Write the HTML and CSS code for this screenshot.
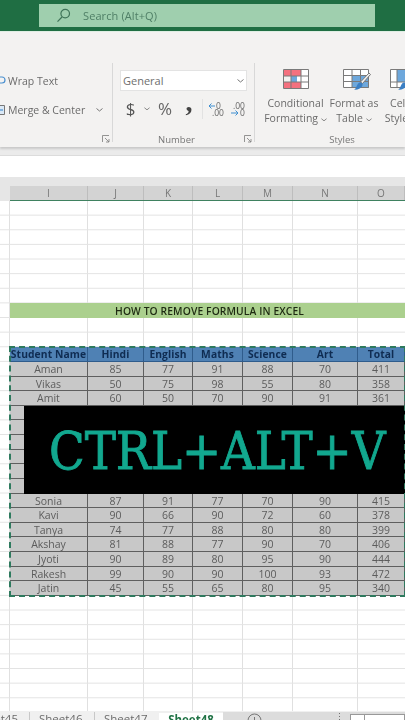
FILE: index.html
```html
<!DOCTYPE html>
<html lang="en">
<head>
<meta charset="utf-8">
<title>How to remove formula in Excel</title>
<link rel="stylesheet" href="styles.css">
</head>
<body>
<div class="app">
  <header class="titlebar">
    <div class="search">
      <svg class="search-icon" width="15" height="15" viewBox="0 0 15 15"><circle cx="9.2" cy="5.6" r="4.3"/><path d="M6 9 1.5 13.6"/></svg>
      <span>Search (Alt+Q)</span>
    </div>
  </header>

  <section class="ribbon">
    <div class="group group-align">
      <div class="align-row"><svg width="6" height="14" viewBox="0 0 6 14"><path class="ic-blue" d="M-3 3h5a2.5 2.5 0 0 1 0 6h-3"/></svg><span>Wrap Text</span></div>
      <div class="align-row"><svg width="6" height="14" viewBox="0 0 6 14"><path class="ic-box" d="M-3 2.5h7.5v9H-3z"/><path class="ic-blue" d="M-2 7h5"/></svg><span>Merge &amp; Center</span><svg class="chev chev-merge" width="7" height="4" viewBox="0 0 7 4"><path d="M.5.5 3.500 3 6.500.5"/></svg></div>
      <svg class="launcher" width="8" height="8" viewBox="0 0 8 8"><path d="M.5 7V.5H7M3 3l4 4M4 7h3V4"/></svg>
    </div>

    <div class="group group-number">
      <div class="select"><span>General</span><svg class="chev" width="7" height="4" viewBox="0 0 7 4"><path d="M.5.5 3.500 3 6.500.5"/></svg></div>
      <div class="num-tools">
        <span class="dollar">$</span>
        <svg class="chev chev-dollar" width="6" height="4" viewBox="0 0 7 4"><path d="M.5.5 3.500 3 6.500.5"/></svg>
        <span class="percent">%</span>
        <span class="comma">,</span>
        <i class="tool-sep"></i>
        <svg class="dec" width="16" height="17" viewBox="0 0 16 17"><text x="8" y="7.500">0</text><text x="4" y="15">.00</text><path class="ic-arrow" d="M7 5H1M3.500 2.500 1 5l2.500 2.500"/></svg>
        <svg class="dec dec-b" width="16" height="17" viewBox="0 0 16 17"><text x="3" y="7.500">.00</text><text x="10" y="15">0</text><path class="ic-arrow" d="M1 12h7M5.500 9.500 8 12l-2.500 2.500"/></svg>
      </div>
      <div class="group-label label-number">Number</div>
      <svg class="launcher" width="8" height="8" viewBox="0 0 8 8"><path d="M.5 7V.5H7M3 3l4 4M4 7h3V4"/></svg>
    </div>

    <div class="group group-styles">
      <div class="style-tools">
        <div class="style-btn btn-cf">
          <svg width="26" height="20" viewBox="0 0 26 20"><path fill="#f4717f" d="M1 1h17v6H1zM1 13h17v6H1z"/><path fill="#6ea8dc" d="M8 7h6v6H8z"/><path fill="#fff" d="M14 7h11v6H14zM18 1h7v6h-7zM18 13h7v6h-7z"/><path class="ic-grid" d="M.5.5h25v19H.5zM.5 7h25M.5 13h25M8 .5v19M18 .5v19"/></svg>
          <span>Conditional</span>
          <span>Formatting <svg class="chev" width="6" height="4" viewBox="0 0 7 4"><path d="M.5.5 3.500 3 6.500.5"/></svg></span>
        </div>
        <div class="style-btn btn-table">
          <svg width="28" height="22" viewBox="0 0 28 22"><path fill="#fff" d="M.5.500h25v18H.5z"/><path fill="#6ea8dc" d="M9 7h17v12H9z"/><path class="ic-grid" d="M.5.5h25v18H.5zM.5 6.500h25M.5 12.500h25M9 .5v18M17.500.5v18"/><path fill="#f3f2f1" stroke="#777" d="m26 4 1.500 1.500-8 9-2-1.500z"/><path fill="#3b7fc4" d="M17 13.500c2 0 3.500 1.500 2 4-1.500 2.500-5 3.500-8 3 2-1 2-2 3-4 .7-1.500 1.500-3 3-3z"/></svg>
          <span>Format as</span>
          <span>Table <svg class="chev" width="6" height="4" viewBox="0 0 7 4"><path d="M.5.5 3.500 3 6.500.5"/></svg></span>
        </div>
        <div class="style-btn btn-cell">
          <svg width="28" height="22" viewBox="0 0 28 22"><path fill="#fff" d="M.5.500h25v18H.5z"/><path fill="#6ea8dc" d="M7 1h19v12H7z"/><path class="ic-grid" d="M.5.5h25v18H.5zM.5 13h25M7 .5v18"/><path fill="#3b7fc4" d="M14 13.500c2 0 3.500 1.500 2 4-1.500 2.500-5 3.500-8 3 2-1 2-2 3-4 .7-1.500 1.500-3 3-3z"/></svg>
          <span>Cell</span>
          <span>Styles</span>
        </div>
      </div>
      <div class="group-label label-styles">Styles</div>
    </div>
  </section>

  <div class="band band-a"></div>
  <div class="formula"></div>
  <div class="band band-b"></div>

  <div class="colhead">
    <span class="corner"></span>
    <span>I</span><span>J</span><span>K</span><span>L</span><span>M</span><span>N</span><span>O</span>
  </div>

  <main class="sheet">
    <h1 class="sheet-title">HOW TO REMOVE FORMULA IN EXCEL</h1>
    <div class="table">
      <div class="row head"><span>Student Name</span><span>Hindi</span><span>English</span><span>Maths</span><span>Science</span><span>Art</span><span>Total</span></div>
      <div class="row"><span>Aman</span><span>85</span><span>77</span><span>91</span><span>88</span><span>70</span><span>411</span></div>
      <div class="row"><span>Vikas</span><span>50</span><span>75</span><span>98</span><span>55</span><span>80</span><span>358</span></div>
      <div class="row"><span>Amit</span><span>60</span><span>50</span><span>70</span><span>90</span><span>91</span><span>361</span></div>
      <div class="covered">
        <div class="stubs"><i></i><i></i><i></i><i></i><i></i><i></i></div>
        <div class="shortcut">CTRL+ALT+V</div>
      </div>
      <div class="row"><span>Sonia</span><span>87</span><span>91</span><span>77</span><span>70</span><span>90</span><span>415</span></div>
      <div class="row"><span>Kavi</span><span>90</span><span>66</span><span>90</span><span>72</span><span>60</span><span>378</span></div>
      <div class="row"><span>Tanya</span><span>74</span><span>77</span><span>88</span><span>80</span><span>80</span><span>399</span></div>
      <div class="row"><span>Akshay</span><span>81</span><span>88</span><span>77</span><span>90</span><span>70</span><span>406</span></div>
      <div class="row"><span>Jyoti</span><span>90</span><span>89</span><span>80</span><span>95</span><span>90</span><span>444</span></div>
      <div class="row"><span>Rakesh</span><span>99</span><span>90</span><span>90</span><span>100</span><span>93</span><span>472</span></div>
      <div class="row"><span>Jatin</span><span>45</span><span>55</span><span>65</span><span>80</span><span>95</span><span>340</span></div>
    </div>
  </main>

  <footer class="tabs">
    <span class="tab tab-cut">Sheet45</span>
    <span class="tab tab-sep">Sheet46</span>
    <span class="tab tab-sep">Sheet47</span>
    <span class="tab tab-active">Sheet48</span>
    <span class="tab-rest">
      <svg class="add" width="15" height="15" viewBox="0 0 15 15"><circle cx="7.500" cy="7.500" r="6.500"/><path d="M7.500 4v7M4 7.500h7"/></svg>
      <span class="dots">&#8942;</span>
      <span class="hscroll"><i></i></span>
    </span>
  </footer>
</div>
</body>
</html>
```
FILE: styles.css
```css
* { box-sizing: border-box; }
html, body { margin: 0; padding: 0; background: #fff; }
body { width: 405px; height: 720px; overflow: hidden; font-family: "Open Sans", "Liberation Sans", sans-serif; }
.app { width: 405px; height: 720px; display: flex; flex-direction: column; overflow: hidden; filter: blur(0.35px); }

.titlebar { height: 32px; flex: none; background: #1f6e43; border-bottom: 1px solid #dfeee4; padding: 4px 30px 0 39px; }
.search { height: 23px; background: #9fcfae; display: flex; align-items: center; padding-left: 17px; gap: 12px; font-size: 11px; color: #4f7f66; letter-spacing: .1px; }
.search-icon { fill: none; stroke: #3f7458; stroke-width: 1.200; }

.ribbon { height: 115px; flex: none; background: #f3f2f1; display: flex; box-shadow: 0 2px 2px #c9c9c9; position: relative; z-index: 1; padding-top: 31px; color: #6b6b6b; overflow: hidden; }
.group { position: relative; flex: none; height: 79px; border-right: 1px solid #d8d8d8; }
.launcher { position: absolute; right: 2px; bottom: -1px; fill: none; stroke: #7b7b7b; stroke-width: .8; }
.chev { fill: none; stroke: #777; stroke-width: 1; }
.group-label { position: absolute; bottom: -5px; left: 0; right: 0; text-align: center; font-size: 9.500px; line-height: 14px; color: #777; }
.label-number { padding-right: 14px; }
.label-styles { padding-left: 12px; }

.group-align { width: 113px; font-size: 10.500px; line-height: 16px; padding-top: 10px; display: flex; flex-direction: column; gap: 13px; }
.align-row { display: flex; align-items: center; gap: 2px; height: 16px; white-space: nowrap; }
.chev-merge { margin-left: 9px; }
.ic-blue { fill: none; stroke: #4a90d0; stroke-width: 1.200; }
.ic-box { fill: #dbe9f6; stroke: #777; }

.group-number { width: 142px; padding: 7px 0 0 7px; }
.select { width: 127px; height: 21px; background: #fff; border: 1px solid #e3e3e3; display: flex; align-items: center; justify-content: space-between; padding: 0 2px 0 2px; font-size: 11px; color: #6e6e6e; }
.num-tools { display: flex; align-items: center; height: 24px; margin-top: 6px; padding-left: 2px; }
.dollar { font-size: 17px; line-height: 24px; color: #555; width: 17px; text-align: center; }
.chev-dollar { margin-left: 5px; }
.percent { font-size: 17px; line-height: 24px; color: #666; margin-left: 8px; width: 20px; }
.comma { font-family: "Liberation Serif", serif; font-weight: 700; font-size: 28px; line-height: 24px; height: 24px; margin-top: -14px; color: #444; margin-left: 6px; width: 10px; text-align: center; }
.tool-sep { width: 1px; height: 20px; background: #e2e2e2; margin-left: 8px; }
.dec { margin-left: 5px; flex: none; }
.dec-b { margin-left: 6px; }
.dec text { font-family: "Open Sans", sans-serif; font-size: 8.500px; fill: #666; }
.ic-arrow { fill: none; stroke: #3f8fd0; stroke-width: 1; }

.group-styles { flex: 1; border-right: 0; }
.style-tools { display: flex; padding: 6px 0 0 9px; }
.style-btn { display: flex; flex-direction: column; align-items: center; font-size: 10.500px; line-height: 14.500px; white-space: nowrap; flex: none; }
.style-btn > svg { height: 22px; margin-bottom: 5px; flex: none; }
.style-btn > span { display: block; }
.btn-cf { width: 63px; }
.btn-cf > svg { height: 20px; margin-bottom: 7px; }
.btn-table { width: 48px; margin-left: 3px; }
.btn-table > svg { margin-left: 6px; }
.btn-cell { width: 36px; margin-left: 3px; }
.btn-cell > svg { margin-left: 10px; }
.ic-grid { fill: none; stroke: #7a7a7a; stroke-width: 1; }

.band { flex: none; }
.band-a { height: 9px; margin-top: 0; background: #ebebeb; border-bottom: 1px solid #dcdcdc; }
.formula { height: 21px; flex: none; background: #fff; }
.band-b { height: 9px; background: #e6e6e6; }

.colhead { height: 15px; flex: none; display: grid; grid-template-columns: 10px 78px 56px 49px 50px 50px 65px 47px; background: #d3d3d3; border-bottom: 1px solid #3f8160; font-size: 10px; line-height: 14px; color: #777; text-align: center; }
.colhead span { border-right: 1px solid #bdbdbd; }
.colhead .corner { background: #e6e6e6; border: 0; margin-bottom: -1px; }

.sheet {
  height: 510px; flex: none; padding: 102.400px 0 0 10px;
  background-color: #fff;
  background-repeat: repeat-y, no-repeat, no-repeat, no-repeat, no-repeat, no-repeat, no-repeat, no-repeat;
  background-image:
    repeating-linear-gradient(to bottom, transparent 0 13.630px, #e3e3e3 13.630px 14.630px),
    linear-gradient(#e0e0e0, #e0e0e0), linear-gradient(#e0e0e0, #e0e0e0), linear-gradient(#e0e0e0, #e0e0e0),
    linear-gradient(#e0e0e0, #e0e0e0), linear-gradient(#e0e0e0, #e0e0e0), linear-gradient(#e0e0e0, #e0e0e0),
    linear-gradient(#e0e0e0, #e0e0e0);
  background-size: 100% 14.630px, 1px 100%, 1px 100%, 1px 100%, 1px 100%, 1px 100%, 1px 100%, 1px 100%;
  background-position: 0 0, 9px 0, 87px 0, 143px 0, 192px 0, 242px 0, 292px 0, 357px 0;
}
.sheet-title { margin: 0; height: 14.630px; background: #abd08e; text-align: center; font-size: 10.300px; line-height: 16px; font-weight: 600; color: #1e2a12; letter-spacing: .1px; white-space: nowrap; overflow: hidden; padding-left: 4px; }

.table { margin-top: 29.260px; outline: 2px dashed #2e7a5e; outline-offset: -1px; }
.row { display: grid; grid-template-columns: 78px 56px 49px 50px 50px 65px 47px; height: 14.630px; font-size: 10.500px; line-height: 15px; color: #5c5c5c; background: #c8c8c8; text-align: center; }
.row span { border-right: 1px solid #5f5f5f; border-bottom: 1px solid #5f5f5f; white-space: nowrap; overflow: hidden; }
.row.head { background: #4f81b4; color: #0f2c52; font-weight: 700; font-size: 10.300px; letter-spacing: .1px; }
.row.head span { border-color: #2f5c8c; }

.covered { display: flex; height: 87.780px; }
.stubs { width: 14px; flex: none; display: grid; grid-template-rows: repeat(6, 1fr); background: #c8c8c8; }
.stubs i { border-bottom: 1px solid #5f5f5f; }
.shortcut { flex: 1; background: #000; color: #12a88f; font-family: "DejaVu Serif", serif; font-stretch: condensed; font-size: 52px; line-height: 90px; height: 87.780px; -webkit-text-stroke: .8px #12a88f; padding-left: 25px; letter-spacing: -.1px; white-space: nowrap; overflow: hidden; }

.tabs { flex: 1; display: flex; align-items: flex-start; background: #f0f0f0; font-size: 11.500px; line-height: 13px; color: #6a6a6a; white-space: nowrap; overflow: hidden; }
.tab { flex: none; padding-top: 0; margin-top: 1px; }
.tab-cut { width: 29px; text-align: right; padding-right: 11px; direction: rtl; overflow: hidden; }
.tab-sep { width: 65px; border-left: 1px solid #c8c8c8; padding-left: 9px; height: 9px; }
.tab-active { width: 64px; margin: 2px 0 0 0; background: #fff; color: #217346; font-weight: 700; text-align: center; height: 9px; }
.tab-rest { flex: 1; height: 9px; margin-top: 1px; background: #dcdcdc; position: relative; display: flex; align-items: flex-start; padding-left: 24px; }
.add { fill: none; stroke: #777; flex: none; margin-top: 1px; }
.dots { margin-left: 73px; font-size: 9px; line-height: 9px; }
.hscroll { width: 55px; height: 8px; margin: 2px 0 0 6px; background: #fff; border: 1px solid #999; border-bottom: 0; flex: none; }
.hscroll i { display: block; width: 14px; height: 100%; border-right: 1px solid #999; }
```
